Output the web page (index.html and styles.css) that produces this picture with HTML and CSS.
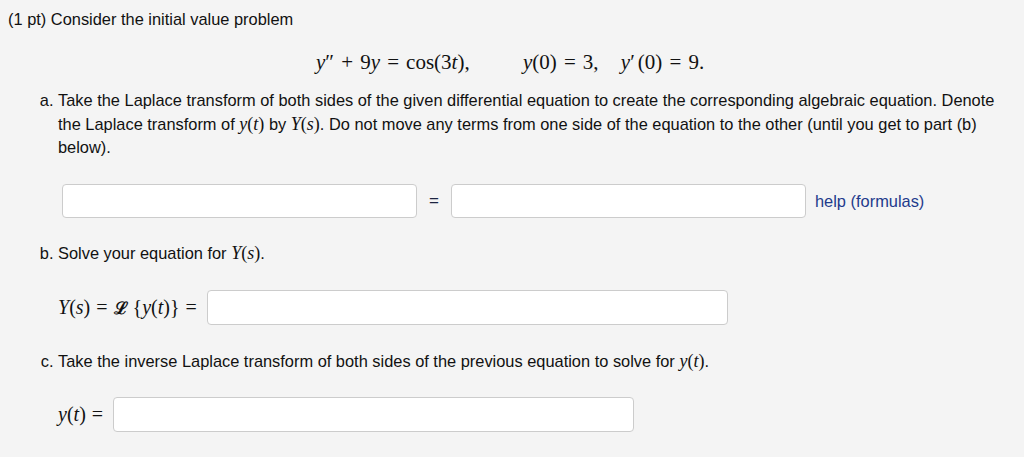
FILE: index.html
```html
<!DOCTYPE html>
<html>
<head>
<meta charset="utf-8">
<link rel="stylesheet" href="styles.css">
</head>
<body>
<p class="intro">(1 pt) Consider the initial value problem</p>
<div class="display">
  <span class="m"><i>y</i>″<span class="bin">+</span>9<i>y</i><span class="rel">=</span>cos(3<i>t</i>),</span>
  <span class="m gap-wide"><i>y</i>(0)<span class="rel">=</span>3,</span>
  <span class="m gap-med"><i>y</i><span class="prime">′</span>(0)<span class="rel">=</span>9.</span>
</div>
<ol class="parts">
  <li class="part">
    <p class="text">Take the Laplace transform of both sides of the given differential equation to create the corresponding algebraic equation. Denote the Laplace transform of <span class="mi"><i>y</i>(<i>t</i>)</span> by <span class="mi"><i>Y</i>(<i>s</i>)</span>. Do not move any terms from one side of the equation to the other (until you get to part (b) below).</p>
    <div class="answer-row row-a">
      <span class="field field-a"></span>
      <span class="eq-sign">=</span>
      <span class="field field-a"></span>
      <a class="help" href="#">help (formulas)</a>
    </div>
  </li>
  <li class="part">
    <p class="text">Solve your equation for <span class="mi"><i>Y</i>(<i>s</i>)</span>.</p>
    <div class="answer-row row-tall">
      <span class="math-label"><i>Y</i>(<i>s</i>)<span class="rel">=</span><span class="script">ℒ</span> {<i>y</i>(<i>t</i>)}<span class="rel">=</span></span>
      <span class="field field-wide"></span>
    </div>
  </li>
  <li class="part part-c">
    <p class="text">Take the inverse Laplace transform of both sides of the previous equation to solve for <span class="mi"><i>y</i>(<i>t</i>)</span>.</p>
    <div class="answer-row row-tall">
      <span class="math-label"><i>y</i>(<i>t</i>)<span class="rel">=</span></span>
      <span class="field field-wide"></span>
    </div>
  </li>
</ol>
</body>
</html>
```
FILE: styles.css
```css
html, body {
  background: #f4f4f4;
}
body {
  margin: 0;
  padding: 8px 4px 8px 8px;
  font-family: "Liberation Sans", Arial, sans-serif;
  font-size: 16.4px;
  color: #111;
}
.intro {
  margin: 0;
  line-height: 23px;
}
.display {
  margin-top: 19px;
  height: 24px;
  line-height: 24px;
  padding-left: 308px;
  font-family: "Liberation Serif", "Times New Roman", serif;
  font-size: 21px;
  white-space: nowrap;
}
.display i, .mi i, .math-label i {
  font-style: italic;
}
.display .bin {
  margin: 0 0.34em;
}
.display .rel {
  margin: 0 0.34em;
}
.rel {
  margin: 0 0.3em;
}
.prime {
  margin-right: 3px;
}
.gap-wide {
  margin-left: 48px;
}
.gap-med {
  margin-left: 17px;
}
.parts {
  list-style: lower-alpha;
  margin: 15px 0 0;
  padding-left: 50px;
}
.part + .part {
  margin-top: 24px;
}
.part + .part-c {
  margin-top: 25px;
}
.text {
  margin: 0;
  line-height: 23.5px;
}
.mi {
  font-family: "Liberation Serif", "Times New Roman", serif;
  font-size: 18px;
}
.answer-row {
  display: flex;
  align-items: center;
  margin-top: 24px;
  height: 34px;
}
.row-a {
  margin-top: 24.5px;
  padding-left: 4px;
}
.row-tall {
  height: 35px;
}
.field {
  display: block;
  box-sizing: border-box;
  height: 100%;
  background: #fff;
  border: 1px solid #cccccc;
  border-radius: 4px;
}
.field-a {
  width: 355px;
}
.eq-sign {
  width: 34px;
  text-align: center;
  color: #1c2440;
  font-size: 17px;
}
.help {
  margin-left: 9px;
  color: #1f3b8c;
  text-decoration: none;
}
.math-label {
  font-family: "Liberation Serif", "Times New Roman", serif;
  font-size: 20px;
  margin-right: 4px;
  white-space: nowrap;
}
.script {
  font-family: "DejaVu Serif", serif;
  font-weight: bold;
  font-size: 17px;
}
.field-wide {
  width: 521px;
}
```
